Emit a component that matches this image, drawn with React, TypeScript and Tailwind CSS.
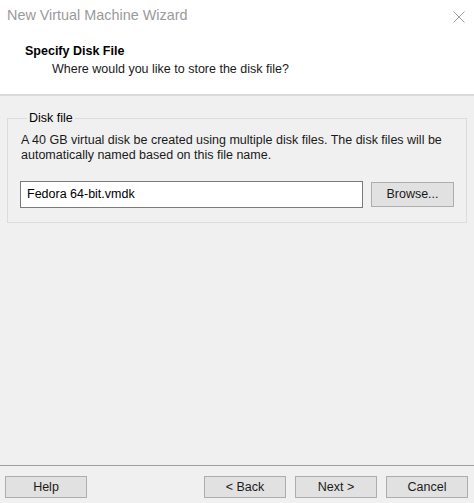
import React from "react";

const font = { fontFamily: '"Liberation Sans", Arial, sans-serif' };

function WinButton({ label, className = "" }: { label: string; className?: string }) {
  return (
    <button
      className={
        "h-[22px] w-[82px] border border-[#adadad] bg-[#e1e1e1] text-[12.5px] text-[#1a1a1a] leading-none " +
        className
      }
    >
      {label}
    </button>
  );
}

export default function App() {
  return (
    <div
      className="w-[474px] h-[503px] flex flex-col bg-[#f0f0f0] text-black overflow-hidden"
      style={font}
    >
      {/* title bar */}
      <div className="h-[32px] bg-white flex items-center justify-between pl-[7px] pr-[9px]">
        <span className="text-[14.4px] text-[#9a9a9a]">New Virtual Machine Wizard</span>
        <svg width="12" height="12" viewBox="0 0 12 12" className="mt-[1px]">
          <path d="M0.5 0.5 L11.5 11.5 M11.5 0.5 L0.5 11.5" stroke="#a0a0a0" strokeWidth="1" />
        </svg>
      </div>

      {/* header */}
      <div className="h-[62px] bg-white pt-[11px]">
        <div className="pl-[25px] text-[12.5px] font-bold leading-[16px]">Specify Disk File</div>
        <div className="pl-[52px] text-[12.5px] leading-[16px] mt-[2px] text-[#1a1a1a]">
          Where would you like to store the disk file?
        </div>
      </div>
      <div className="h-[2px] bg-[#d9d9d9]" />

      {/* body */}
      <div className="flex-1 pt-[14px]">
        <fieldset className="ml-[7px] mr-[8px] border border-[#dcdcdc] pl-[13px] pr-[12px] pb-[14px]">
          <legend className="ml-[6px] px-[2px] text-[12.5px] leading-[16px]">Disk file</legend>
          <p className="mt-[7px] text-[12.5px] leading-[15px] text-[#1a1a1a]">
            A 40 GB virtual disk be created using multiple disk files. The disk files will be
            automatically named based on this file name.
          </p>
          <div className="mt-[18px] flex items-center gap-[8px] -ml-[1px]">
            <div className="h-[27px] w-[343px] border border-[#7a7a7a] bg-white flex items-center pl-[6px] text-[12.5px]">
              Fedora 64-bit.vmdk
            </div>
            <WinButton label="Browse..." className="w-[83px] h-[25px]" />
          </div>
        </fieldset>
      </div>

      {/* footer */}
      <div className="h-[1px] bg-[#a0a0a0]" />
      <div className="h-[37px] flex items-start pt-[10px] pl-[5px] pr-[6px]">
        <WinButton label="Help" />
        <div className="flex-1" />
        <div className="flex gap-[9px]">
          <WinButton label="< Back" />
          <WinButton label="Next >" />
          <WinButton label="Cancel" />
        </div>
      </div>
    </div>
  );
}
